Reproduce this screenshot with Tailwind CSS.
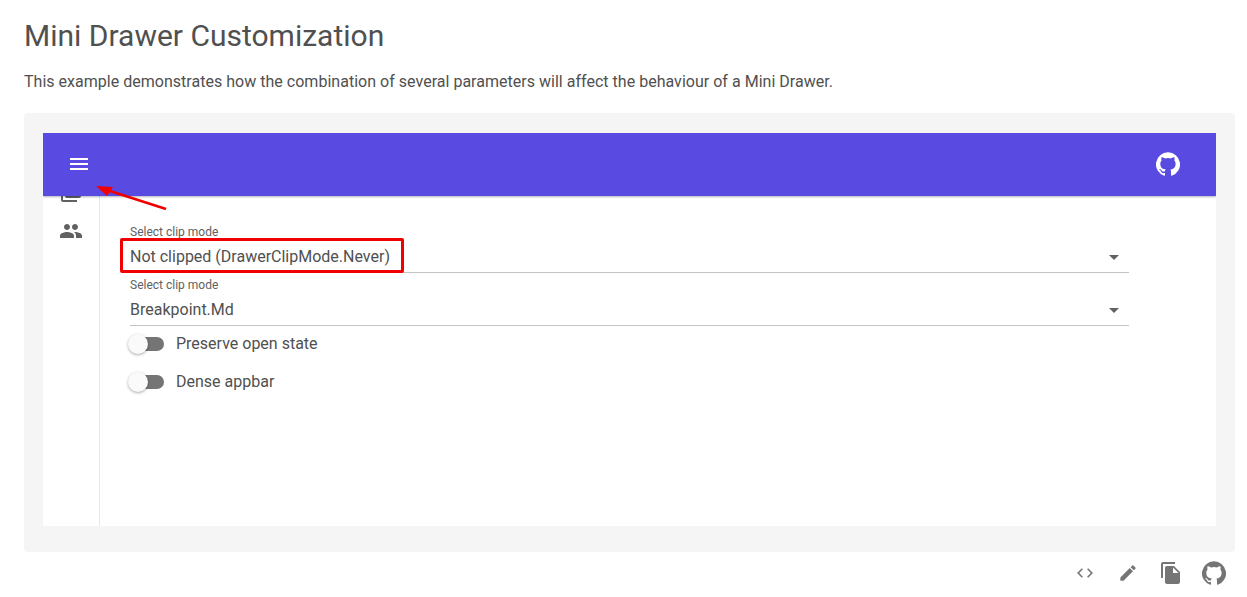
<!DOCTYPE html>
<html lang="en">
<head>
  <meta charset="UTF-8" />
  <title>Mini Drawer Customization</title>
  <script src="https://cdn.jsdelivr.net/npm/@tailwindcss/browser@4"></script>
</head>
<body class="bg-white font-['Roboto',sans-serif] text-[#505050] overflow-hidden">
  <div class="relative w-[1247px] h-[597px] pl-6 pt-[16px]">
    <h1 class="text-[30px] leading-[40px] font-normal">Mini Drawer Customization</h1>
    <p class="mt-[16px] text-base leading-[20px] tracking-[0.02px]">This example demonstrates how the combination of several parameters will affect the behaviour of a Mini Drawer.</p>

    <!-- demo card -->
    <div class="mt-[21px] w-[1211px] h-[439px] bg-[#f5f5f5] rounded pt-5 pl-[19px]">
      <div class="relative w-[1173px] h-[393px] bg-white overflow-hidden">
        <header class="relative z-10 h-[63px] bg-[#594ae2] flex items-center justify-between pl-6 pr-[36px] pb-[2px] shadow-[0_1px_2px_rgba(0,0,0,0.3)]">
          <svg class="w-6 h-6 fill-white" viewBox="0 0 24 24"><path d="M3 18h18v-2H3v2zm0-5h18v-2H3v2zm0-7v2h18V6H3z"/></svg>
          <svg class="w-6 h-6 fill-white" viewBox="0 0 24 24"><path d="M12 .3a12 12 0 0 0-3.800 23.400c.6.100.8-.3.8-.6v-2c-3.300.7-4-1.600-4-1.600-.6-1.400-1.400-1.800-1.400-1.800-1-.7.1-.7.1-.7 1.200.1 1.800 1.200 1.800 1.200 1 1.800 2.800 1.300 3.500 1 .1-.8.400-1.300.8-1.600-2.700-.3-5.500-1.300-5.500-6 0-1.200.5-2.300 1.300-3.100-.2-.4-.6-1.600 0-3.200 0 0 1-.3 3.400 1.200a11.500 11.500 0 0 1 6 0c2.300-1.500 3.300-1.200 3.300-1.200.6 1.600.2 2.800 0 3.200.9.800 1.300 1.900 1.300 3.200 0 4.600-2.800 5.600-5.500 5.900.5.400.9 1.100.9 2.200v3.300c0 .3.100.7.800.6A12 12 0 0 0 12 .3"/></svg>
        </header>

        <div class="flex h-[330px]">
          <!-- mini drawer, first item is cut off by the appbar -->
          <aside class="w-[57px] shrink-0 border-r border-[#e8e8e8] pl-4 relative">
            <div class="-mt-[16px]">
              <svg class="w-6 h-6 fill-[#616161]" viewBox="0 0 24 24"><path d="M4 6H2v14c0 1.100.9 2 2 2h14v-2H4V6zm16-4H8c-1.100 0-2 .9-2 2v12c0 1.100.9 2 2 2h12c1.100 0 2-.9 2-2V4c0-1.100-.9-2-2-2zm-1 9H9V9h10v2zm-4 4H9v-2h6v2zm4-8H9V5h10v2z"/></svg>
              <svg class="w-6 h-6 mt-[15px] fill-[#616161]" viewBox="0 0 24 24"><path d="M16 11c1.660 0 2.990-1.340 2.990-3S17.660 5 16 5c-1.660 0-3 1.340-3 3s1.340 3 3 3zm-8 0c1.660 0 2.990-1.340 2.990-3S9.660 5 8 5C6.340 5 5 6.340 5 8s1.340 3 3 3zm0 2c-2.330 0-7 1.170-7 3.500V19h14v-2.500c0-2.330-4.670-3.500-7-3.500zm8 0c-.29 0-.62.020-.97.050 1.160.84 1.970 1.970 1.970 3.450V19h6v-2.500c0-2.330-4.670-3.500-7-3.500z"/></svg>
            </div>
          </aside>

          <main class="w-[999px] ml-[30px] pt-[29px]">
            <label class="block text-xs leading-[14px] text-[#616161]">Select clip mode</label>
            <div class="h-[34px] border-b border-[#c4c4c4] flex items-center justify-between pr-[10px] text-base pt-[3px]">
              <span>Not clipped (DrawerClipMode.Never)</span>
              <span class="w-0 h-0 border-x-[5px] border-x-transparent border-t-[5px] border-t-[#616161]"></span>
            </div>
            <label class="block mt-[5px] text-xs leading-[14px] text-[#616161]">Select clip mode</label>
            <div class="h-[34px] border-b border-[#c4c4c4] flex items-center justify-between pr-[10px] text-base pt-[3px]">
              <span>Breakpoint.Md</span>
              <span class="w-0 h-0 border-x-[5px] border-x-transparent border-t-[5px] border-t-[#616161]"></span>
            </div>
            <div class="mt-[8px] flex items-center h-[20px] gap-3 text-base">
              <span class="relative block w-[34px] h-[14px] rounded-full bg-[#757575]">
                <span class="absolute -left-[2px] -top-[3px] w-5 h-5 rounded-full bg-[#fafafa] shadow-[0_1px_3px_rgba(0,0,0,0.35)]"></span>
              </span>
              <span>Preserve open state</span>
            </div>
            <div class="mt-[18px] flex items-center h-[20px] gap-3 text-base">
              <span class="relative block w-[34px] h-[14px] rounded-full bg-[#757575]">
                <span class="absolute -left-[2px] -top-[3px] w-5 h-5 rounded-full bg-[#fafafa] shadow-[0_1px_3px_rgba(0,0,0,0.35)]"></span>
              </span>
              <span>Dense appbar</span>
            </div>
          </main>
        </div>
      </div>
    </div>

    <!-- source toolbar -->
    <div class="mt-[9px] w-[1211px] flex justify-end gap-[19px] pr-[9px]">
      <svg class="w-6 h-6 fill-[#757575]" viewBox="0 0 24 24"><path d="M9.400 16.600 4.800 12l4.600-4.600L8 6l-6 6 6 6 1.400-1.400zm5.200 0 4.600-4.600-4.600-4.600L16 6l6 6-6 6-1.400-1.400z" transform="translate(2.400 2.400) scale(.8)"/></svg>
      <svg class="w-6 h-6 fill-[#757575]" viewBox="0 0 24 24"><path d="M3 17.250V21h3.750L17.810 9.940l-3.750-3.750L3 17.250zM20.710 7.040a1 1 0 0 0 0-1.410l-2.340-2.340a1 1 0 0 0-1.410 0l-1.830 1.830 3.750 3.750 1.830-1.830z" transform="translate(1.800 1.800) scale(.85)"/></svg>
      <svg class="w-6 h-6 fill-[#757575]" viewBox="0 0 24 24"><path d="M16 1H4c-1.100 0-2 .9-2 2v14h2V3h12V1zm-1 4 6 6v10c0 1.100-.9 2-2 2H7.990C6.890 23 6 22.100 6 21l.010-14c0-1.100.89-2 1.990-2h7zm-1 7h5.500L14 6.500V12z"/></svg>
      <svg class="w-6 h-6 fill-[#757575]" viewBox="0 0 24 24"><path d="M12 .3a12 12 0 0 0-3.800 23.400c.6.100.8-.3.8-.6v-2c-3.300.7-4-1.600-4-1.600-.6-1.400-1.400-1.800-1.400-1.800-1-.7.1-.7.1-.7 1.200.1 1.800 1.200 1.800 1.200 1 1.800 2.800 1.300 3.500 1 .1-.8.400-1.300.8-1.600-2.700-.3-5.500-1.300-5.500-6 0-1.200.5-2.300 1.300-3.100-.2-.4-.6-1.600 0-3.200 0 0 1-.3 3.400 1.200a11.500 11.500 0 0 1 6 0c2.300-1.500 3.300-1.200 3.300-1.200.6 1.600.2 2.800 0 3.200.9.800 1.300 1.900 1.300 3.200 0 4.600-2.800 5.600-5.500 5.900.5.400.9 1.100.9 2.200v3.300c0 .3.100.7.800.6A12 12 0 0 0 12 .3"/></svg>
    </div>

    <!-- screenshot annotations on top of the page -->
    <div class="absolute z-20 left-[120px] top-[238px] w-[284px] h-[35px] border-[3px] border-[#f00000] rounded-[2px]"></div>
    <svg class="absolute z-20 left-[90px] top-[180px] w-[80px] h-[35px]" viewBox="0 0 80 35">
      <path d="M76 29 20 11" stroke="#f00000" stroke-width="2.500" fill="none"/>
      <path d="M6 6 23 7 17 16z" fill="#f00000"/>
    </svg>
  </div>
</body>
</html>
